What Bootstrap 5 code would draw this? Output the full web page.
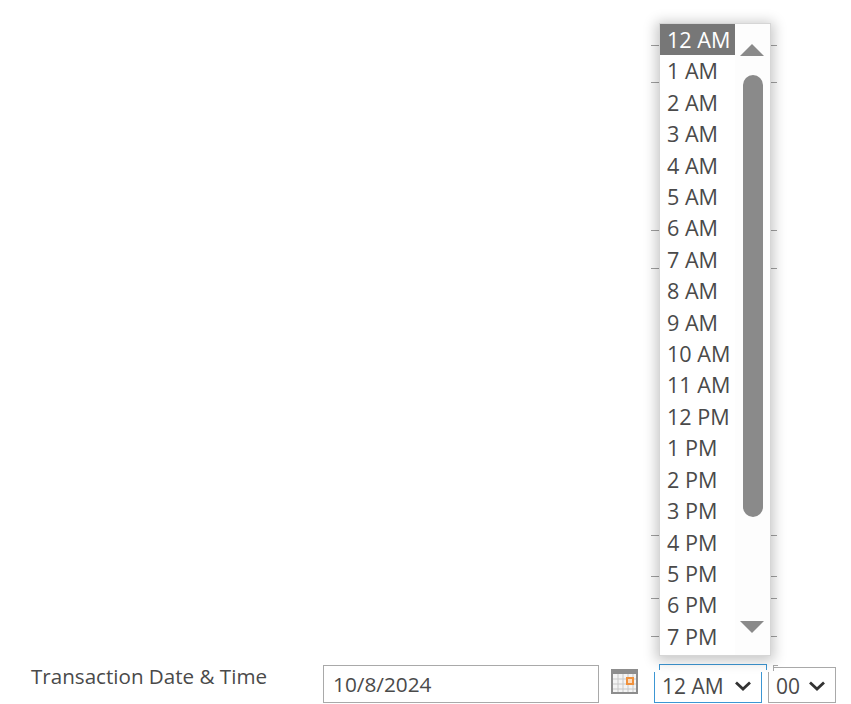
<!doctype html>
<html lang="en">
<head>
<meta charset="utf-8">
<title>Transaction Date &amp; Time</title>
<link href="https://cdn.jsdelivr.net/npm/bootstrap@5.3.0/dist/css/bootstrap.min.css" rel="stylesheet">
<style>
html,body{margin:0;height:704px;overflow:hidden;background:#fff}
body{font-family:"Open Sans","Noto Sans",sans-serif;color:#4a4a4a;position:relative}
.stage{position:relative;width:851px;height:704px;overflow:hidden}
.tick{position:absolute;height:1px;background:#a0a0a0}
.tl{left:651px;width:9px}.tr{left:770px;width:7px}
.formrow{position:absolute;left:0;right:0;top:664px;height:40px}
.lbl{margin:0 0 0 31px;width:292px;font-size:20.6px;line-height:26px;margin-top:-1px;color:#4a4a4a;white-space:nowrap}
.datebox{width:276px;height:38px;margin-top:1px;border:1px solid #a9a9a9;padding:0 9px;font-size:20.8px;line-height:37px;color:#4a4a4a}
.calbtn{width:55px;height:38px;display:flex;padding:5px 0 0 12px;align-items:flex-start}
.sel{height:31px;margin-top:8px;border:1px solid #a9a9a9;border-top:0;display:flex;align-items:center;font-size:21px;line-height:28px;padding-bottom:3px;position:relative}
.selh{width:108px;border-color:#3c96d3;padding-left:7px}
.selm{width:68px;margin-left:6px;padding-left:7px}
.sel svg{position:absolute;top:9px}
.selh svg{left:79px}.selm svg{left:39px}
.frame{position:absolute;border:1px solid #3c96d3;border-bottom:0;left:4px;top:-8px;width:108px;height:6px}
.frame2{position:absolute;border:1px solid #a9a9a9;border-bottom:0;border-left:0;left:4px;top:-5px;width:63px;height:5px}
.frame2::before{content:"";position:absolute;left:0;top:-3px;width:5px;height:6px;border:1px solid #a9a9a9;border-right:0;border-bottom:0}
.pop{position:absolute;left:659px;top:23px;width:112px;height:633px;background:#fff;border:1px solid #d6d6d6;box-shadow:0 2px 12px 3px rgba(0,0,0,.22);z-index:5;overflow:hidden}
.opts{width:75px;font-size:21.6px;color:#4a4a4a}
.opts .opt{height:31.42px;line-height:31.42px;padding-left:7px;white-space:nowrap}
.opts .opt.on{background:#777;color:#fff}
.bar{position:absolute;left:75px;top:0;bottom:0;width:35px;background:#fdfdfd}
.thumb{position:absolute;left:8px;top:51px;width:20px;height:442px;background:#8a8a8a;border-radius:10px}
.bar svg{position:absolute;left:5px}
</style>
</head>
<body>
<div class="stage">
  <span class="tick tl" style="top:45px"></span><span class="tick tr" style="top:45px"></span>
  <span class="tick tl" style="top:82px"></span><span class="tick tr" style="top:82px"></span>
  <span class="tick tl" style="top:230px"></span><span class="tick tr" style="top:230px"></span>
  <span class="tick tl" style="top:268px"></span><span class="tick tr" style="top:268px"></span>
  <span class="tick tl" style="top:535px"></span><span class="tick tr" style="top:535px"></span>
  <span class="tick tl" style="top:576px"></span><span class="tick tr" style="top:576px"></span>
  <span class="tick tl" style="top:598px"></span><span class="tick tr" style="top:598px"></span>
  <span class="tick tl" style="top:636px"></span><span class="tick tr" style="top:636px"></span>

  <div class="formrow d-flex align-items-start">
    <label class="lbl">Transaction Date &amp; Time</label>
    <div class="datebox">10/8/2024</div>
    <div class="calbtn">
      <svg width="27" height="25" viewBox="0 0 27 25" aria-hidden="true">
        <rect x="0" y="0" width="27" height="25" fill="#8d8d8d"/>
        <rect x="2" y="5" width="23" height="18" fill="#f4f4f4"/>
        <path d="M7 5v18M12 5v18M17 5v18M22 5v18M2 10h23M2 15h23M2 20h23" stroke="#c8c8c8" stroke-width="1"/>
        <rect x="16" y="9" width="6" height="6" fill="#fbdcc0" stroke="#f0913c" stroke-width="2"/>
      </svg>
    </div>
    <div class="sel selh">12 AM<span class="frame"></span>
      <svg width="18" height="10" viewBox="0 0 18 10"><path d="M2 1.5 9 8l7-6.500" fill="none" stroke="#333" stroke-width="2.800"/></svg>
    </div>
    <div class="sel selm">00<span class="frame2"></span>
      <svg width="18" height="10" viewBox="0 0 18 10"><path d="M2 1.5 9 8l7-6.500" fill="none" stroke="#333" stroke-width="2.800"/></svg>
    </div>
  </div>

  <div class="pop">
    <div class="opts">
      <div class="opt on">12 AM</div><div class="opt">1 AM</div><div class="opt">2 AM</div><div class="opt">3 AM</div><div class="opt">4 AM</div><div class="opt">5 AM</div><div class="opt">6 AM</div><div class="opt">7 AM</div><div class="opt">8 AM</div><div class="opt">9 AM</div><div class="opt">10 AM</div><div class="opt">11 AM</div><div class="opt">12 PM</div><div class="opt">1 PM</div><div class="opt">2 PM</div><div class="opt">3 PM</div><div class="opt">4 PM</div><div class="opt">5 PM</div><div class="opt">6 PM</div><div class="opt">7 PM</div>
    </div>
    <div class="bar">
      <svg style="top:20px" width="24" height="12" viewBox="0 0 24 12"><path d="M12 0 24 12H0z" fill="#8a8a8a"/></svg>
      <div class="thumb"></div>
      <svg style="top:597px" width="24" height="12" viewBox="0 0 24 12"><path d="M0 0h24L12 12z" fill="#8a8a8a"/></svg>
    </div>
  </div>
</div>
<script src="https://cdn.jsdelivr.net/npm/bootstrap@5.3.0/dist/js/bootstrap.bundle.min.js"></script>
</body>
</html>
